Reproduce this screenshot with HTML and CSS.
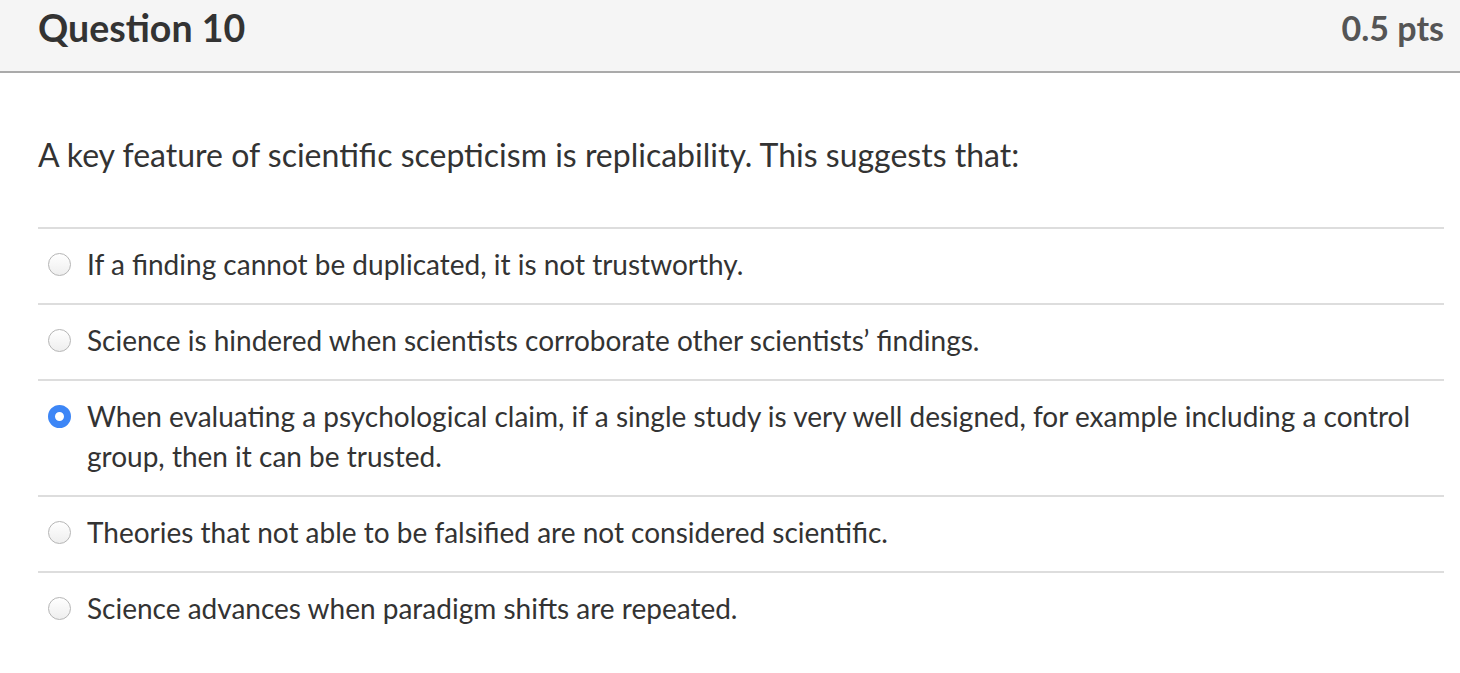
FILE: index.html
```html
<!DOCTYPE html>
<html>
<head>
<meta charset="utf-8">
<link rel="stylesheet" href="styles.css">
</head>
<body>
<div class="question">
  <div class="header">
    <h2 class="title">Question 10</h2>
    <span class="pts">0.5 pts</span>
  </div>
  <div class="content">
    <p class="prompt">A key feature of scientific scepticism is replicability. This suggests that:</p>
    <div class="answers">
      <div class="answer"><span class="radio"></span><span class="label">If a finding cannot be duplicated, it is not trustworthy.</span></div>
      <div class="answer"><span class="radio"></span><span class="label">Science is hindered when scientists corroborate other scientists’ findings.</span></div>
      <div class="answer"><span class="radio checked"></span><span class="label">When evaluating a psychological claim, if a single study is very well designed, for example including a control group, then it can be trusted.</span></div>
      <div class="answer"><span class="radio"></span><span class="label">Theories that not able to be falsified are not considered scientific.</span></div>
      <div class="answer"><span class="radio"></span><span class="label">Science advances when paradigm shifts are repeated.</span></div>
    </div>
  </div>
</div>
</body>
</html>
```
FILE: styles.css
```css
html, body {
  margin: 0;
  padding: 0;
  background: #fff;
}
body {
  font-family: Lato, "Liberation Sans", sans-serif;
  color: #333;
}
.header {
  background: #f5f5f5;
  border-bottom: 2px solid #aaa;
  height: 73px;
  box-sizing: border-box;
  display: flex;
  align-items: center;
  justify-content: space-between;
  padding: 0 16px 16px 38px;
}
.title {
  margin: 0;
  font-size: 37.5px;
  font-weight: 700;
  color: #333;
}
.pts {
  font-size: 34px;
  font-weight: 700;
  color: #555;
}
.content {
  padding: 0 16px 0 38px;
}
.prompt {
  margin: 0;
  padding-top: 62px;
  height: 154px;
  box-sizing: border-box;
  font-size: 32px;
  line-height: 40px;
}
.answers {
  border-top: 2px solid #ddd;
}
.answer {
  display: flex;
  align-items: flex-start;
  padding: 15px 0 19px 0;
  border-bottom: 2px solid #ddd;
  font-size: 28px;
  line-height: 40px;
}
.answer:last-child {
  border-bottom: none;
}
.radio {
  flex: none;
  width: 23px;
  height: 23px;
  box-sizing: border-box;
  border-radius: 50%;
  border: 1px solid #b5b5b5;
  background: linear-gradient(#fff, #eee);
  margin: 9px 16px 0 10px;
}
.radio.checked {
  border: 7px solid #3d86f6;
  background: #fff;
}
.label {
  flex: 1;
}
```
